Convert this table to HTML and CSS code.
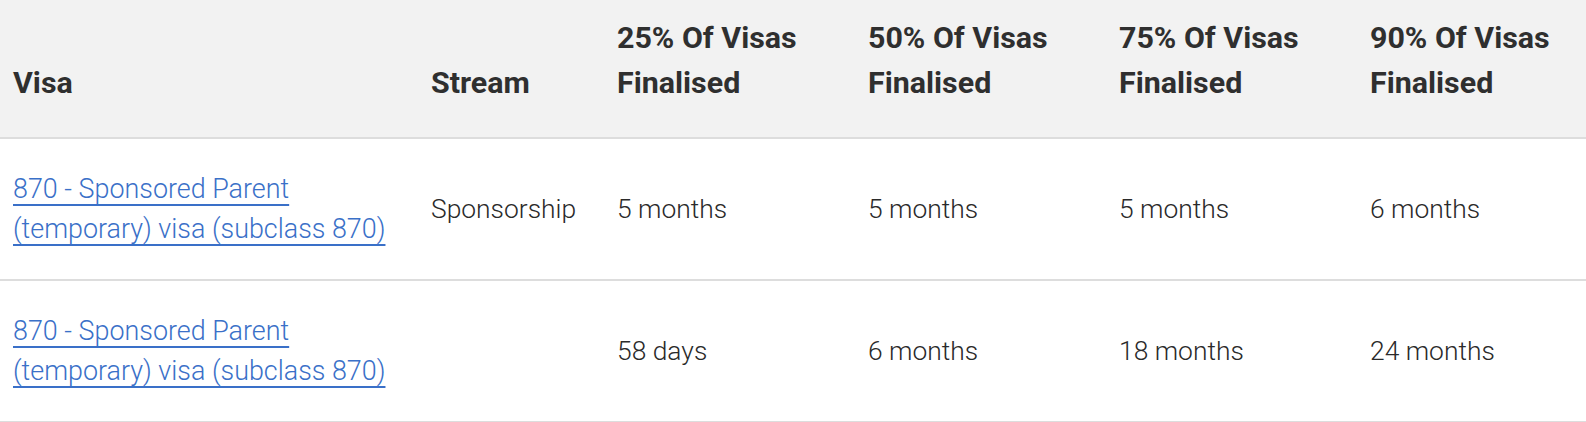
FILE: index.html
```html
<!DOCTYPE html>
<html lang="en">
<head>
<meta charset="utf-8">
<title>Visa processing times</title>
<link rel="stylesheet" href="styles.css">
</head>
<body>
<table class="times">
  <colgroup>
    <col class="c-visa">
    <col class="c-stream">
    <col class="c-pct">
    <col class="c-pct">
    <col class="c-pct">
    <col>
  </colgroup>
  <thead>
    <tr>
      <th>Visa</th>
      <th>Stream</th>
      <th>25% Of Visas<br>Finalised</th>
      <th>50% Of Visas<br>Finalised</th>
      <th>75% Of Visas<br>Finalised</th>
      <th>90% Of Visas<br>Finalised</th>
    </tr>
  </thead>
  <tbody>
    <tr>
      <td><a href="#">870 - Sponsored Parent<br>(temporary) visa (subclass 870)</a></td>
      <td>Sponsorship</td>
      <td>5 months</td>
      <td>5 months</td>
      <td>5 months</td>
      <td>6 months</td>
    </tr>
    <tr>
      <td><a href="#">870 - Sponsored Parent<br>(temporary) visa (subclass 870)</a></td>
      <td></td>
      <td>58 days</td>
      <td>6 months</td>
      <td>18 months</td>
      <td>24 months</td>
    </tr>
  </tbody>
</table>
</body>
</html>
```

FILE: styles.css
```css
html, body {
  margin: 0;
  padding: 0;
  background: #ffffff;
}

body {
  font-family: Roboto, "Liberation Sans", Arial, sans-serif;
  color: #333333;
}

.times {
  width: 1586px;
  border-collapse: collapse;
  table-layout: fixed;
}

.c-visa { width: 418px; }
.c-stream { width: 186px; }
.c-pct { width: 251px; }

.times th {
  background: #f2f2f2;
  font-size: 30.4px;
  font-weight: 700;
  line-height: 45px;
  text-align: left;
  vertical-align: bottom;
  padding: 15px 13px 32px 13px;
  color: #2f2f2f;
  border-bottom: 2px solid #dddddd;
}

.times td {
  font-size: 26.4px;
  font-weight: 300;
  line-height: 40px;
  vertical-align: middle;
  padding: 30px 13px 30px 13px;
  color: #2a2a2a;
  border-bottom: 2px solid #dddddd;
}

.times a {
  font-size: 26.9px;
  color: #3a70c8;
  text-decoration: underline;
  text-decoration-thickness: 2px;
  text-underline-offset: 6px;
}
```
